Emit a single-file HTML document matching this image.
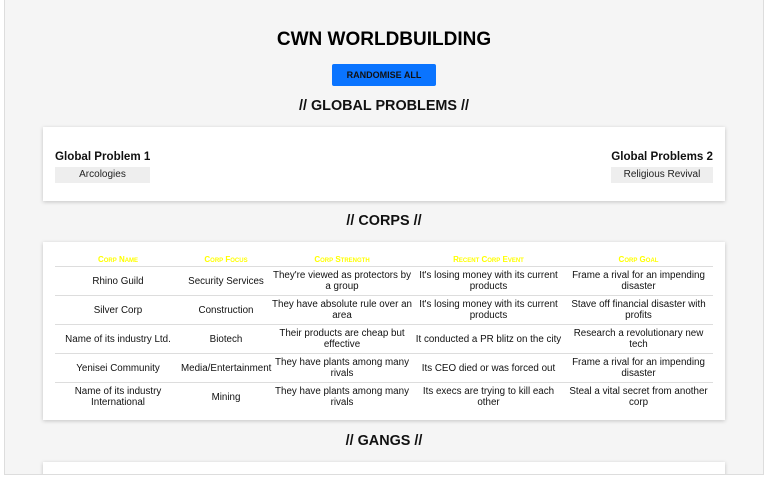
<!DOCTYPE html>
<html><head><style>
body{margin:0;background:#fff;font-family:"Liberation Sans",Arial,sans-serif;}
.page{position:absolute;left:4px;top:0;width:758px;height:474px;background:#f5f5f5;border:1px solid #ddd;border-top:none;overflow:hidden;}
h1{position:absolute;left:0;width:100%;top:29px;margin:0;text-align:center;font-size:19px;font-weight:bold;color:#000;}
.btn{position:absolute;left:327px;top:64px;width:104px;height:22px;background:#0a74ff;border-radius:2px;font-size:9px;font-weight:bold;text-align:center;line-height:22px;color:#111;}
h2{position:absolute;left:0;width:100%;margin:0;text-align:center;font-size:14.4px;font-weight:bold;color:#111;}
.card{position:absolute;left:38px;width:682px;background:#fff;box-shadow:0 1px 4px rgba(0,0,0,0.2);}
.lab{position:absolute;font-size:11.6px;font-weight:bold;color:#111;}
.tag{position:absolute;height:16px;background:#eee;font-size:10px;line-height:16px;text-align:center;color:#222;}
table{position:absolute;left:12px;top:10px;width:658px;border-collapse:collapse;font-size:9.8px;color:#111;table-layout:fixed;}
th{color:#ff0;font-variant:small-caps;font-size:8px;font-weight:bold;height:14px;padding:0;border-bottom:1px solid #ddd;}
td{text-align:center;height:28px;padding:0;line-height:11px;border-bottom:1px solid #ddd;}
tr:last-child td{border-bottom:none}
</style></head><body>
<div class="page">
<h1>CWN WORLDBUILDING</h1>
<div class="btn">RANDOMISE ALL</div>
<h2 style="top:98px">// GLOBAL PROBLEMS //</h2>
<div class="card" style="top:127px;height:74px">
<div class="lab" style="left:12px;top:23px">Global Problem 1</div>
<div class="tag" style="left:12px;top:40px;width:95px">Arcologies</div>
<div class="lab" style="right:12px;top:23px">Global Problems 2</div>
<div class="tag" style="right:12px;top:40px;width:102px">Religious Revival</div>
</div>
<h2 style="top:213px">// CORPS //</h2>
<div class="card" style="top:242px;height:178px">
<table>
<colgroup><col style="width:126px"><col style="width:90px"><col style="width:142px"><col style="width:151px"><col style="width:149px"></colgroup>
<tr><th>Corp Name</th><th>Corp Focus</th><th>Corp Strength</th><th>Recent Corp Event</th><th>Corp Goal</th></tr>
<tr><td>Rhino Guild</td><td>Security Services</td><td>They're viewed as protectors by a group</td><td>It's losing money with its current products</td><td>Frame a rival for an impending disaster</td></tr>
<tr><td>Silver Corp</td><td>Construction</td><td>They have absolute rule over an area</td><td>It's losing money with its current products</td><td>Stave off financial disaster with profits</td></tr>
<tr><td>Name of its industry Ltd.</td><td>Biotech</td><td>Their products are cheap but effective</td><td>It conducted a PR blitz on the city</td><td>Research a revolutionary new tech</td></tr>
<tr><td>Yenisei Community</td><td>Media/Entertainment</td><td>They have plants among many rivals</td><td>Its CEO died or was forced out</td><td>Frame a rival for an impending disaster</td></tr>
<tr><td>Name of its industry International</td><td>Mining</td><td>They have plants among many rivals</td><td>Its execs are trying to kill each other</td><td>Steal a vital secret from another corp</td></tr>
</table>
</div>
<h2 style="top:433px">// GANGS //</h2>
<div class="card" style="top:462px;height:40px"></div>
</div>
</body></html>
